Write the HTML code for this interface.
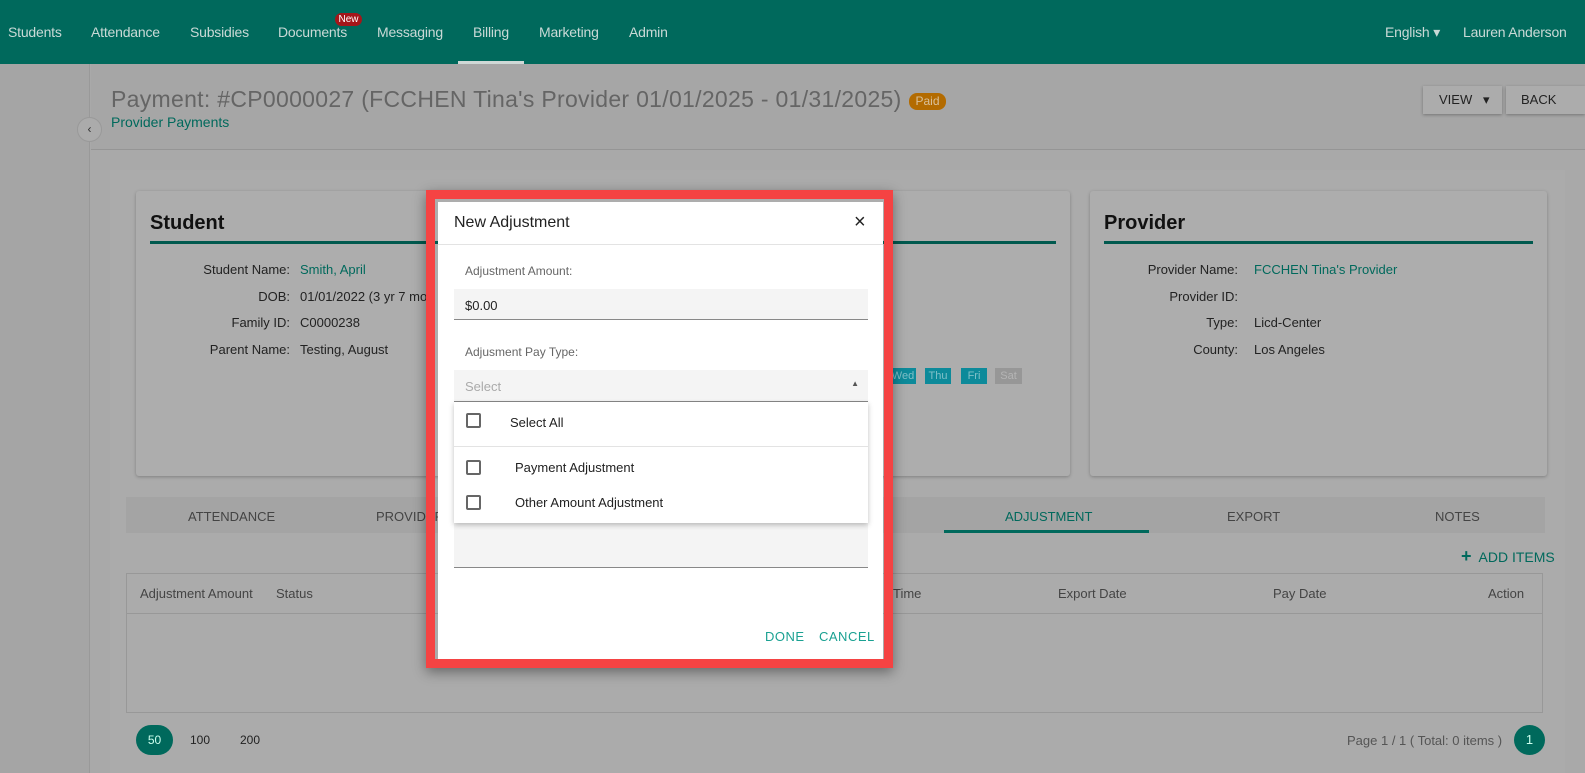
<!DOCTYPE html>
<html><head><meta charset="utf-8"><style>
*{box-sizing:border-box;margin:0;padding:0}
body{width:1585px;height:773px;overflow:hidden;background:#a9a9a9;font-family:"Liberation Sans",Arial,sans-serif;position:relative;color:#333}
.abs{position:absolute}
.nav{left:0;top:0;width:1585px;height:64px;background:#00695c}
.nav span{position:absolute;top:24px;font-size:14px;color:#c9d9d6;letter-spacing:-0.2px}
.lbl{font-size:13px;color:#222;text-align:right;width:150px}
.val{font-size:13px;color:#222}
.teal{color:#00695c}
</style></head><body>
<div class="abs nav">
<span style="left:8px">Students</span>
<span style="left:91px">Attendance</span>
<span style="left:190px">Subsidies</span>
<span style="left:278px">Documents</span>
<div class="abs" style="left:335px;top:13px;width:27px;height:13px;background:#a4161a;border-radius:7px;color:#fff;font-size:10px;text-align:center;line-height:13px">New</div>
<span style="left:377px">Messaging</span>
<span style="left:473px">Billing</span>
<span style="left:539px">Marketing</span>
<span style="left:629px">Admin</span>
<div class="abs" style="left:458px;top:61px;width:66px;height:3px;background:#cfd8d6"></div>
<span style="left:1385px">English ▾</span>
<span style="left:1463px">Lauren Anderson</span>
</div>
<div class="abs" style="left:0;top:64px;width:90px;height:709px;background:#a5a5a5;border-right:1px solid #999"></div>
<div class="abs" style="left:91px;top:64px;width:1494px;height:86px;background:#a6a6a6;border-bottom:1px solid #959595"></div>
<div class="abs" style="left:77px;top:117px;width:25px;height:25px;border-radius:50%;background:#ababab;border:1px solid #999;font-size:12px;text-align:center;line-height:22px;color:#333">‹</div>
<div class="abs" style="left:111px;top:86px;font-size:23px;color:#656565;letter-spacing:0.3px;white-space:nowrap">Payment: #CP0000027 (FCCHEN Tina's Provider 01/01/2025 - 01/31/2025)</div>
<div class="abs" style="left:909px;top:93px;width:37px;height:17px;background:#b36b00;border-radius:8px;color:#d9c09a;font-size:12px;text-align:center;line-height:17px">Paid</div>
<div class="abs teal" style="left:111px;top:114px;font-size:14px">Provider Payments</div>
<div class="abs" style="left:1423px;top:86px;width:79px;height:28px;background:#acacac;box-shadow:0 1px 3px rgba(0,0,0,.3);font-size:13px;color:#222;line-height:28px;padding-left:16px">VIEW &nbsp; ▾</div>
<div class="abs" style="left:1506px;top:86px;width:79px;height:28px;background:#acacac;box-shadow:0 1px 3px rgba(0,0,0,.3);font-size:13px;color:#222;line-height:28px;padding-left:15px">BACK</div>
<div class="abs" style="left:110px;top:170px;width:1455px;height:603px;background:#ababab"></div>
<div class="abs" style="left:136px;top:191px;width:934px;height:285px;background:#adadad;box-shadow:0 1px 3px rgba(0,0,0,.25);border-radius:3px"></div>
<div class="abs" style="left:1090px;top:191px;width:457px;height:285px;background:#adadad;box-shadow:0 1px 3px rgba(0,0,0,.25);border-radius:3px"></div>
<div class="abs" style="left:150px;top:212px;font-size:20px;font-weight:bold;color:#111">Student</div>
<div class="abs" style="left:150px;top:241px;width:906px;height:3px;background:#00594e"></div>
<div class="abs" style="left:1104px;top:212px;font-size:20px;font-weight:bold;color:#111">Provider</div>
<div class="abs" style="left:1104px;top:241px;width:429px;height:3px;background:#00594e"></div>
<div class="abs lbl" style="left:140px;top:262px">Student Name:</div><div class="abs val teal" style="left:300px;top:262px">Smith, April</div>
<div class="abs lbl" style="left:140px;top:289px">DOB:</div><div class="abs val" style="left:300px;top:289px">01/01/2022 (3 yr 7 mo</div>
<div class="abs lbl" style="left:140px;top:315px">Family ID:</div><div class="abs val" style="left:300px;top:315px">C0000238</div>
<div class="abs lbl" style="left:140px;top:342px">Parent Name:</div><div class="abs val" style="left:300px;top:342px">Testing, August</div>
<div class="abs lbl" style="left:1088px;top:262px">Provider Name:</div><div class="abs val teal" style="left:1254px;top:262px">FCCHEN Tina's Provider</div>
<div class="abs lbl" style="left:1088px;top:289px">Provider ID:</div>
<div class="abs lbl" style="left:1088px;top:315px">Type:</div><div class="abs val" style="left:1254px;top:315px">Licd-Center</div>
<div class="abs lbl" style="left:1088px;top:342px">County:</div><div class="abs val" style="left:1254px;top:342px">Los Angeles</div>
<div class="abs" style="left:890px;top:368px;width:26px;height:16px;background:#0d8a9a;color:#7fc0c8;font-size:11px;line-height:16px;text-align:center">Wed</div>
<div class="abs" style="left:925px;top:368px;width:26px;height:16px;background:#0d8a9a;color:#7fc0c8;font-size:11px;line-height:16px;text-align:center">Thu</div>
<div class="abs" style="left:961px;top:368px;width:26px;height:16px;background:#0d8a9a;color:#7fc0c8;font-size:11px;line-height:16px;text-align:center">Fri</div>
<div class="abs" style="left:995px;top:368px;width:27px;height:16px;background:#979797;color:#b5b5b5;font-size:11px;line-height:16px;text-align:center">Sat</div>
<div class="abs" style="left:126px;top:497px;width:1419px;height:36px;background:#a4a4a4"></div>
<div class="abs" style="left:188px;top:509px;font-size:13px;color:#444">ATTENDANCE</div>
<div class="abs" style="left:376px;top:509px;font-size:13px;color:#444">PROVIDER</div>
<div class="abs teal" style="left:1005px;top:509px;font-size:13px">ADJUSTMENT</div>
<div class="abs" style="left:944px;top:530px;width:205px;height:3px;background:#00695c"></div>
<div class="abs" style="left:1227px;top:509px;font-size:13px;color:#444">EXPORT</div>
<div class="abs" style="left:1435px;top:509px;font-size:13px;color:#444">NOTES</div>
<div class="abs teal" style="left:1461px;top:546px;font-size:14px"><b style="font-size:18px">+</b>&nbsp; ADD ITEMS</div>
<div class="abs" style="left:126px;top:573px;width:1417px;height:140px;border:1px solid #989898"></div>
<div class="abs" style="left:126px;top:613px;width:1417px;height:1px;background:#989898"></div>
<div class="abs" style="left:140px;top:586px;font-size:13px;color:#444">Adjustment Amount</div>
<div class="abs" style="left:276px;top:586px;font-size:13px;color:#444">Status</div>
<div class="abs" style="left:893px;top:586px;font-size:13px;color:#444">Time</div>
<div class="abs" style="left:1058px;top:586px;font-size:13px;color:#444">Export Date</div>
<div class="abs" style="left:1273px;top:586px;font-size:13px;color:#444">Pay Date</div>
<div class="abs" style="left:1488px;top:586px;font-size:13px;color:#444">Action</div>
<div class="abs" style="left:136px;top:725px;width:37px;height:30px;border-radius:15px;background:#00695c;color:#cfe;font-size:12px;text-align:center;line-height:30px">50</div>
<div class="abs" style="left:190px;top:733px;font-size:12px;color:#222">100</div>
<div class="abs" style="left:240px;top:733px;font-size:12px;color:#222">200</div>
<div class="abs" style="left:1347px;top:733px;font-size:13px;color:#555">Page 1 / 1 ( Total: 0 items )</div>
<div class="abs" style="left:1514px;top:725px;width:31px;height:30px;border-radius:50%;background:#00695c;color:#cfe;font-size:13px;text-align:center;line-height:30px">1</div>

<div class="abs" style="left:426px;top:190px;width:467px;height:478px;border:9px solid #f54343;box-shadow:0 4px 12px rgba(0,0,0,.4)"></div>
<div class="abs" style="left:438px;top:202px;width:445px;height:457px;background:#fff">
<div class="abs" style="left:16px;top:12px;font-size:16px;color:#222">New Adjustment</div>
<div class="abs" style="left:416px;top:9px;font-size:20px;color:#222">×</div>
<div class="abs" style="left:0;top:42px;width:445px;height:1px;background:#e3e3e3"></div>
<div class="abs" style="left:27px;top:62px;font-size:12px;color:#666">Adjustment Amount:</div>
<div class="abs" style="left:16px;top:87px;width:414px;height:31px;background:#f4f4f4;border-bottom:1px solid #888;font-size:13px;color:#222;padding:9px 11px">$0.00</div>
<div class="abs" style="left:27px;top:143px;font-size:12px;color:#666">Adjusment Pay Type:</div>
<div class="abs" style="left:16px;top:168px;width:414px;height:32px;background:#f4f4f4;border-bottom:1px solid #888;font-size:13px;color:#aaa;padding:9px 11px">Select<span style="position:absolute;right:9px;top:9px;font-size:8px;color:#555">▲</span></div>
<div class="abs" style="left:16px;top:265px;width:414px;height:101px;background:#f4f4f4;border-bottom:1px solid #888"></div>
<div class="abs" style="left:16px;top:200px;width:414px;height:121px;background:#fff;box-shadow:0 2px 5px rgba(0,0,0,.25)">
<div class="abs" style="left:12px;top:11px;width:15px;height:15px;border:2px solid #666;border-radius:2px"></div>
<div class="abs" style="left:56px;top:13px;font-size:13px;color:#222">Select All</div>
<div class="abs" style="left:0;top:44px;width:414px;height:1px;background:#e3e3e3"></div>
<div class="abs" style="left:12px;top:58px;width:15px;height:15px;border:2px solid #666;border-radius:2px"></div>
<div class="abs" style="left:61px;top:58px;font-size:13px;color:#222">Payment Adjustment</div>
<div class="abs" style="left:12px;top:93px;width:15px;height:15px;border:2px solid #666;border-radius:2px"></div>
<div class="abs" style="left:61px;top:93px;font-size:13px;color:#222">Other Amount Adjustment</div>
</div>
<div class="abs" style="left:327px;top:427px;font-size:13px;color:#1aa192;letter-spacing:.5px">DONE</div>
<div class="abs" style="left:381px;top:427px;font-size:13px;color:#1aa192;letter-spacing:.5px">CANCEL</div>
</div>
</body></html>
